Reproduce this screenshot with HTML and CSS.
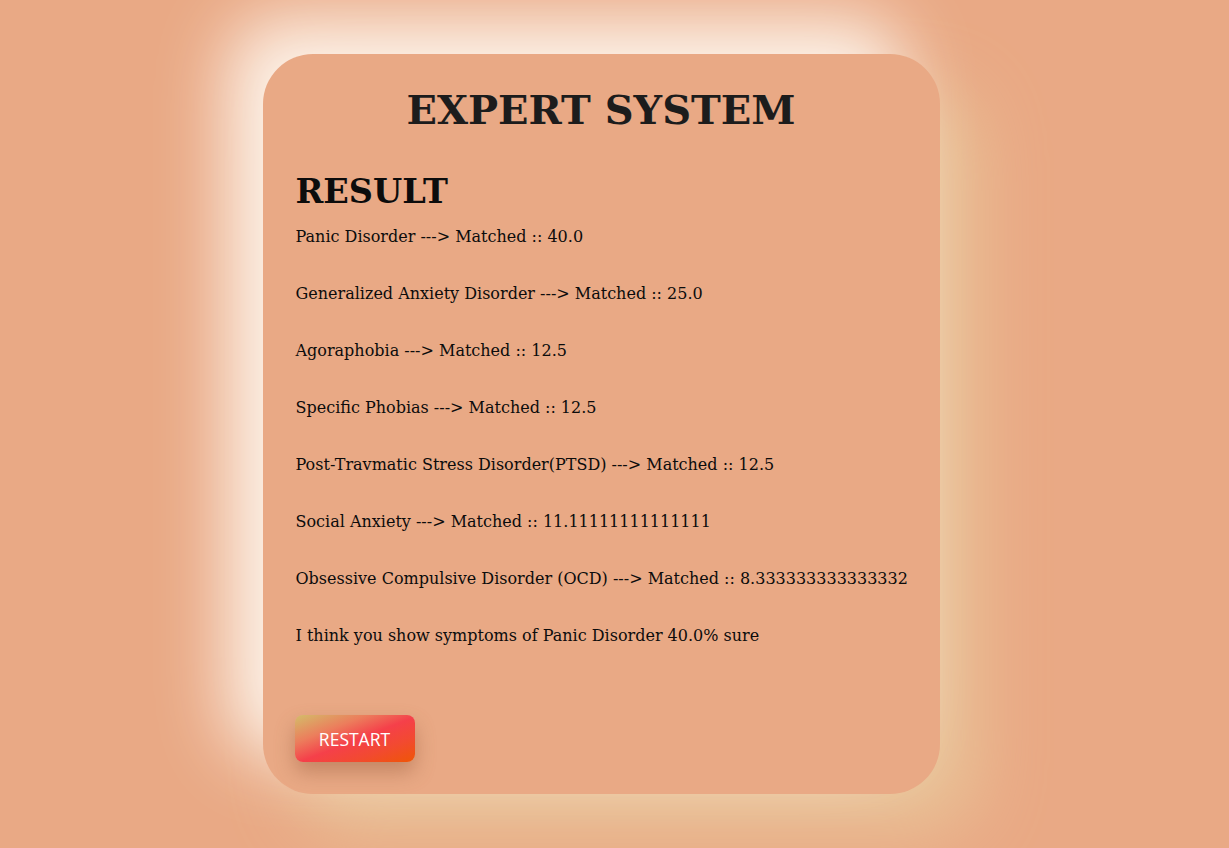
FILE: index.html
```html
<!DOCTYPE html>
<html>
<head>
<meta charset="utf-8">
<link rel="stylesheet" href="styles.css">
</head>
<body>
<div class="page">
  <div class="card">
    <h1 class="title">EXPERT SYSTEM</h1>
    <h2 class="subtitle">RESULT</h2>
    <div class="results">
      <p class="line">Panic Disorder ---&gt; Matched :: 40.0</p>
      <p class="line">Generalized Anxiety Disorder ---&gt; Matched :: 25.0</p>
      <p class="line">Agoraphobia ---&gt; Matched :: 12.5</p>
      <p class="line">Specific Phobias ---&gt; Matched :: 12.5</p>
      <p class="line">Post-Travmatic Stress Disorder(PTSD) ---&gt; Matched :: 12.5</p>
      <p class="line">Social Anxiety ---&gt; Matched :: 11.11111111111111</p>
      <p class="line">Obsessive Compulsive Disorder (OCD) ---&gt; Matched :: 8.333333333333332</p>
      <p class="line">I think you show symptoms of Panic Disorder 40.0% sure</p>
    </div>
    <button class="restart">RESTART</button>
  </div>
</div>
</body>
</html>
```
FILE: styles.css
```css
html, body {
  margin: 0;
  padding: 0;
  height: 100%;
}
body {
  background: #e9a985;
  font-family: "DejaVu Serif", serif;
  color: #111;
  overflow: hidden;
}
.page {
  display: flex;
  justify-content: center;
  padding-top: 54px;
  padding-right: 27px;
}
.card {
  width: 677px;
  height: 740px;
  box-sizing: border-box;
  background: #e9a985;
  border-radius: 50px;
  padding: 32px 32px 32px 32px;
  box-shadow: -36px -36px 70px #fdf3ea, 36px 36px 70px #e9c498;
  display: flex;
  flex-direction: column;
}
.title {
  margin: 0;
  text-align: center;
  font-size: 40px;
  font-weight: bold;
  color: #1c1c1c;
  line-height: 48px;
}
.subtitle {
  margin: 38px 0 0 1px;
  font-size: 33.5px;
  font-weight: bold;
  line-height: 40px;
  color: #0c0c0c;
}
.results {
  display: flex;
  flex-direction: column;
  gap: 38px;
  margin-top: 15px;
  padding-left: 1px;
}
.line {
  margin: 0;
  font-size: 16px;
  line-height: 19px;
  color: #0c0c0c;
  white-space: nowrap;
}
.restart {
  margin-top: 70px;
  align-self: flex-start;
  flex-shrink: 0;
  width: 120px;
  height: 47px;
  border: none;
  border-radius: 8px;
  background: linear-gradient(to bottom right, #d3bd6a 0%, #ec7d5c 30%, #f5404a 52%, #f24a30 74%, #ef5606 100%);
  color: #fff;
  font-family: "Open Sans", sans-serif;
  font-size: 17.5px;
  box-shadow: 0 10px 20px rgba(150, 90, 60, 0.45);
}
```
